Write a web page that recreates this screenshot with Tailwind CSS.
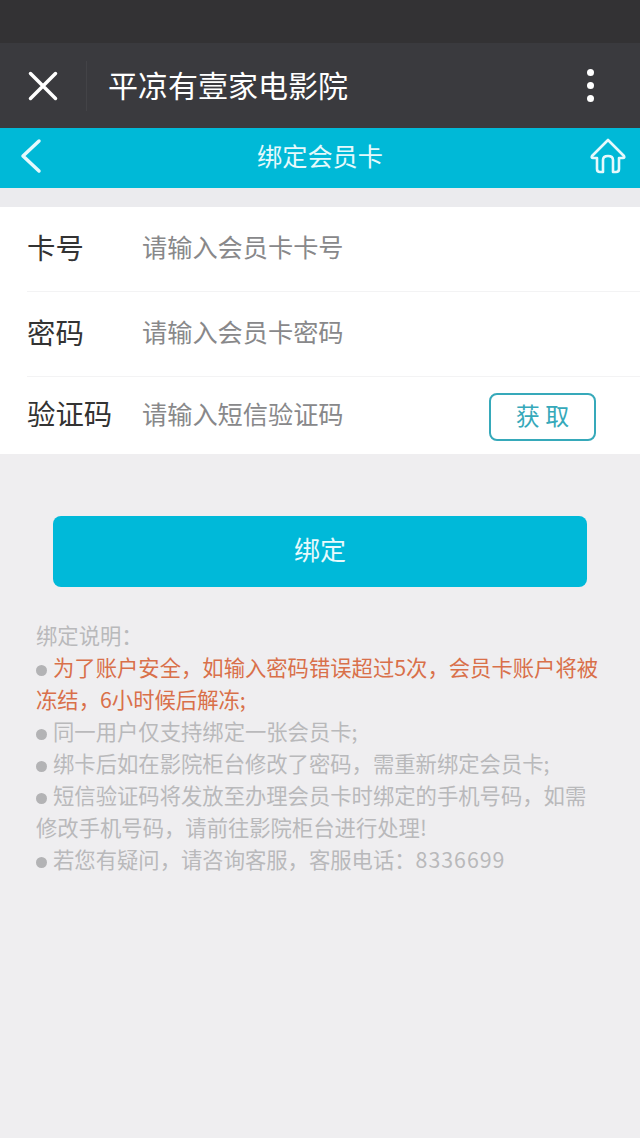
<!DOCTYPE html>
<html lang="zh-CN">
<head>
    <meta charset="UTF-8">
    <meta name="viewport" content="width=device-width, initial-scale=1.0">
    <title>绑定会员卡</title>
    <script src="https://cdn.jsdelivr.net/npm/@tailwindcss/browser@4"></script>
</head>
<body class="bg-[#efeef0] font-['Noto_Sans_CJK_SC',sans-serif]">
    <div class="w-[640px] h-[1138px] overflow-hidden flex flex-col">
        <!-- status bar -->
        <div class="h-[43px] bg-[#333234]"></div>

        <!-- webview nav -->
        <div class="h-[85px] bg-[#3a3a3e] flex items-center">
            <div class="w-[86px] flex justify-center">
                <svg class="w-[30px] h-[30px]" viewBox="0 0 30 30" fill="none" stroke="#ffffff" stroke-width="3.5" stroke-linecap="round"><path d="M2.5 2.5 L27.5 27.5 M27.5 2.5 L2.5 27.5"/></svg>
            </div>
            <div class="h-[50px] border-l border-[#434347]"></div>
            <div class="ml-[21px] mb-[4px] text-[30px] leading-none text-white flex-1">平凉有壹家电影院</div>
            <div class="w-[7px] mr-[46px] flex flex-col gap-[6px]">
                <span class="w-[7px] h-[7px] rounded-full bg-white"></span>
                <span class="w-[7px] h-[7px] rounded-full bg-white"></span>
                <span class="w-[7px] h-[7px] rounded-full bg-white"></span>
            </div>
        </div>

        <!-- page header -->
        <div class="h-[60px] pb-[4px] bg-[#00b9d7] flex items-center justify-between relative">
            <svg class="ml-[20px] w-[22px] h-[36px]" viewBox="0 0 22 36" fill="none" stroke="#e6f9fc" stroke-width="3.5" stroke-linecap="round" stroke-linejoin="round"><path d="M19 3 L3 18 L19 33"/></svg>
            <div class="absolute inset-x-0 text-center text-[25.2px] leading-none text-[#e6f9fc]">绑定会员卡</div>
            <svg class="mr-[14px] w-[36px] h-[36px]" viewBox="0 0 36 36" fill="none" stroke="#e6f9fc" stroke-width="2.6" stroke-linejoin="round"><path d="M18 2 L2 18 Q1 20 3 20 H7 V31 Q7 34 10 34 H13 V22 Q13 18 18 18 Q23 18 23 22 V34 H26 Q29 34 29 31 V20 H33 Q35 20 34 18 Z"/></svg>
        </div>

        <div class="h-[19px] bg-[#ebebee]"></div>

        <!-- form -->
        <div class="bg-white h-[247px] pl-[27px]">
            <div class="h-[85px] pb-[4px] flex items-center border-b border-[#f3f3f4]">
                <label class="w-[115px] text-[28.4px] leading-none text-[#333333]">卡号</label>
                <input class="flex-1 text-[25.2px] outline-none placeholder:text-[#88888a]" placeholder="请输入会员卡卡号">
            </div>
            <div class="h-[85px] pb-[4px] flex items-center border-b border-[#f3f3f4]">
                <label class="w-[115px] text-[28.4px] leading-none text-[#333333]">密码</label>
                <input class="flex-1 text-[25.2px] outline-none placeholder:text-[#88888a]" placeholder="请输入会员卡密码">
            </div>
            <div class="h-[77px] pb-[4px] flex items-center pr-[44px]">
                <label class="w-[115px] text-[28.4px] leading-none text-[#333333]">验证码</label>
                <input class="flex-1 min-w-0 text-[25.2px] outline-none placeholder:text-[#88888a]" placeholder="请输入短信验证码">
                <button class="self-start mt-[16px] w-[107px] h-[48px] pb-[5px] border-2 border-[#36a9ba] rounded-[8px] text-[24px] leading-none text-[#36a9ba]">获 取</button>
            </div>
        </div>

        <!-- submit -->
        <button class="mt-[62px] mx-[53px] h-[71px] pb-[5px] rounded-[8px] bg-[#00b9d9] text-[26px] leading-none text-[#e8fafc]">绑定</button>

        <!-- notes -->
        <div class="mt-[32px] ml-[36px] mr-[36px] text-[21.33px] leading-[32px] text-[#b9b9bb]">
            <p>绑定说明：</p>
            <p class="text-[#d9704a]"><span class="inline-block w-[11px] h-[11px] rounded-full bg-[#b3b3b5] mr-[6px]"></span>为了账户安全，如输入密码错误超过5次，会员卡账户将被冻结，6小时候后解冻;</p>
            <p><span class="inline-block w-[11px] h-[11px] rounded-full bg-[#b3b3b5] mr-[6px]"></span>同一用户仅支持绑定一张会员卡;</p>
            <p><span class="inline-block w-[11px] h-[11px] rounded-full bg-[#b3b3b5] mr-[6px]"></span>绑卡后如在影院柜台修改了密码，需重新绑定会员卡;</p>
            <p><span class="inline-block w-[11px] h-[11px] rounded-full bg-[#b3b3b5] mr-[6px]"></span>短信验证码将发放至办理会员卡时绑定的手机号码，如需修改手机号码，请前往影院柜台进行处理!</p>
            <p><span class="inline-block w-[11px] h-[11px] rounded-full bg-[#b3b3b5] mr-[6px]"></span>若您有疑问，请咨询客服，客服电话：<span class="tracking-[1px]">8336699</span></p>
        </div>
    </div>
</body>
</html>
